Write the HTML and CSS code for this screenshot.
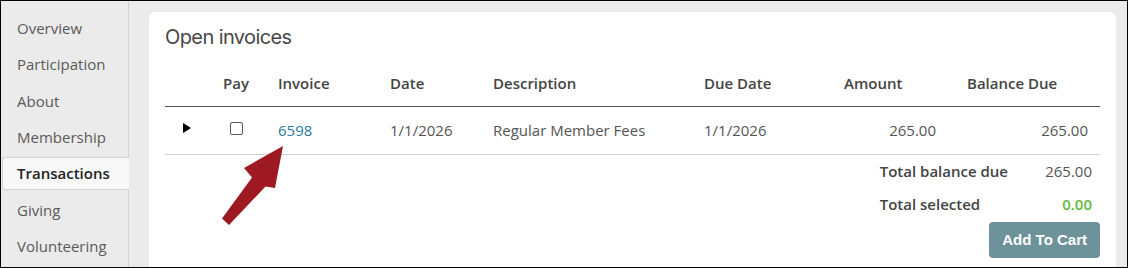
FILE: index.html
```html
<!DOCTYPE html>
<html>
<head>
<meta charset="utf-8">
<link rel="stylesheet" href="styles.css">
</head>
<body>
<div class="frame">
  <nav class="sidebar">
    <div class="nav-item">Overview</div>
    <div class="nav-item">Participation</div>
    <div class="nav-item">About</div>
    <div class="nav-item">Membership</div>
    <div class="nav-item active">Transactions</div>
    <div class="nav-item">Giving</div>
    <div class="nav-item">Volunteering</div>
  </nav>
  <main class="card">
    <h2 class="title">Open invoices</h2>
    <table class="invoices">
      <colgroup>
        <col class="c-exp"><col class="c-pay"><col class="c-inv"><col class="c-date"><col class="c-desc"><col class="c-due"><col class="c-amt"><col class="c-bal">
      </colgroup>
      <thead>
        <tr>
          <th></th>
          <th class="pay">Pay</th>
          <th>Invoice</th>
          <th>Date</th>
          <th>Description</th>
          <th>Due Date</th>
          <th>Amount</th>
          <th>Balance Due</th>
        </tr>
      </thead>
      <tbody>
        <tr>
          <td class="exp"><span class="tri"></span></td>
          <td class="pay"><input type="checkbox" class="chk"></td>
          <td><a class="link" href="#">6598</a></td>
          <td>1/1/2026</td>
          <td>Regular Member Fees</td>
          <td>1/1/2026</td>
          <td class="num amt">265.00</td>
          <td class="num bal">265.00</td>
        </tr>
      </tbody>
    </table>
    <div class="totals">
      <div class="t-label">Total balance due</div>
      <div class="t-val">265.00</div>
      <div class="t-label">Total selected</div>
      <div class="t-val green">0.00</div>
    </div>
    <div class="actions">
      <button class="btn">Add To Cart</button>
    </div>
    <svg class="arrow" width="80" height="100" viewBox="215 140 80 100">
      <polygon points="283,146 275,188 265.5,186.5 229,225 222,218.5 252,177.5 244,168" fill="#9e1a22"/>
    </svg>
  </main>
</div>
</body>
</html>
```
FILE: styles.css
```css
* { box-sizing: border-box; }
html, body { margin: 0; padding: 0; }
body { background: #fff; }
.frame {
  width: 1128px;
  height: 268px;
  border: 1px solid #000;
  background: #ebebeb;
  display: flex;
  overflow: hidden;
  font-family: "Open Sans", "Liberation Sans", sans-serif;
  position: relative;
}
.sidebar {
  width: 128px;
  border-right: 1px solid #d3d3d3;
  padding-top: 11px;
  display: flex;
  flex-direction: column;
  gap: 3.33px;
  flex-shrink: 0;
}
.nav-item {
  height: 33px;
  line-height: 33px;
  padding-left: 16px;
  font-size: 15px;
  color: #5a5a5a;
}
.nav-item.active {
  margin-left: 1px;
  margin-right: -1px;
  padding-left: 14px;
  background: #f8f8f8;
  border: 1px solid #d3d3d3;
  border-right: none;
  border-radius: 3px 0 0 3px;
  line-height: 31px;
  font-weight: 600;
  color: #222;
}
.card {
  margin-left: 20px;
  margin-top: 11px;
  width: 967px;
  background: #fff;
  border-radius: 6px 6px 0 0;
  padding: 12px 16px 0 16px;
  flex-shrink: 0;
}
.title {
  margin: 0;
  font-family: Inter, "Open Sans", sans-serif;
  font-weight: 400;
  font-size: 20px;
  line-height: 26px;
  color: #474747;
  letter-spacing: -0.6px;
}
.invoices {
  margin-top: 10px;
  width: 935px;
  border-collapse: collapse;
  table-layout: fixed;
  font-size: 15px;
}
.c-exp { width: 45px; }
.c-pay { width: 56px; }
.c-inv { width: 112px; }
.c-date { width: 103px; }
.c-desc { width: 211px; }
.c-due { width: 140px; }
.c-amt { width: 123px; }
.c-bal { width: 145px; }
.invoices th {
  height: 46px;
  text-align: left;
  font-weight: 600;
  color: #444;
  padding: 0 0 0 12px;
  border-bottom: 1px solid #555;
  vertical-align: middle;
}
.invoices td {
  height: 48px;
  padding: 0 0 0 12px;
  color: #555;
  border-bottom: 1px solid #d0d0d0;
  vertical-align: middle;
}
.invoices th.pay, .invoices td.pay {
  text-align: center;
  padding: 0 4px 0 0;
}
.invoices td.exp { padding-left: 18px; }
.tri {
  display: block;
  width: 0;
  height: 0;
  border-left: 8px solid #000;
  border-top: 5px solid transparent;
  border-bottom: 5px solid transparent;
  margin-top: -5px;
}
.chk {
  appearance: none;
  -webkit-appearance: none;
  width: 13px;
  height: 13px;
  margin: 0;
  border: 1px solid #5a5a5a;
  border-radius: 2px;
  background: #fff;
  vertical-align: middle;
  position: relative;
  top: -3px;
}
.link {
  color: #2a7ca0;
  text-decoration: none;
}
.invoices td.num { text-align: right; }
.invoices td.amt { padding-right: 19px; }
.invoices td.bal { padding-right: 12px; }
.totals {
  display: grid;
  grid-template-columns: auto 84px;
  justify-content: end;
  padding-right: 8px;
  font-size: 15px;
}
.t-label {
  height: 33px;
  line-height: 33px;
  font-weight: 600;
  color: #444;
}
.t-val {
  height: 33px;
  line-height: 33px;
  text-align: right;
  color: #555;
}
.t-val.green { color: #62b83e; font-weight: 600; }
.actions {
  display: flex;
  justify-content: flex-end;
  margin-top: 1px;
}
.btn {
  height: 36px;
  padding: 0 13px;
  border: none;
  border-radius: 4px;
  background: #6e9299;
  color: #fff;
  font-family: "Liberation Sans", Arial, sans-serif;
  font-weight: 700;
  font-size: 15px;
}
.arrow {
  position: absolute;
  left: 214px;
  top: 139px;
}
```
